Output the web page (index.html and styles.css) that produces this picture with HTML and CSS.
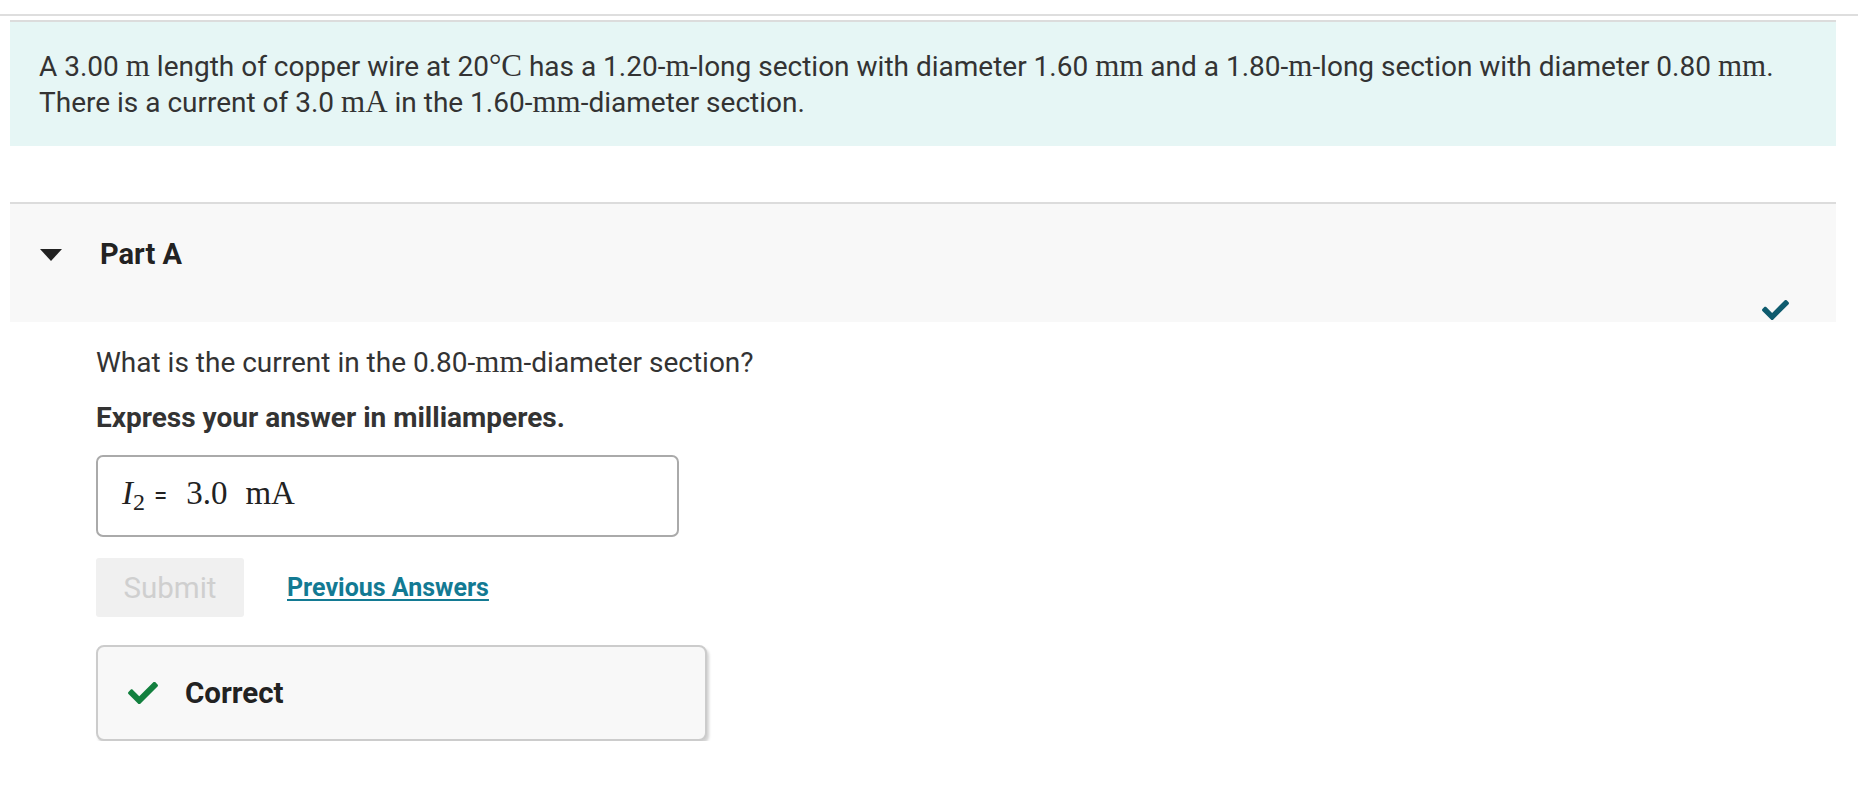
FILE: index.html
```html
<!DOCTYPE html>
<html>
<head>
<meta charset="utf-8">
<link rel="stylesheet" href="styles.css">
</head>
<body>
<div class="page">
  <div class="topline"></div>
  <div class="intro">
    <p>A 3.00 <span class="mj">m</span> length of copper wire at 20<span class="mj">°C</span> has a 1.20-<span class="mj">m</span>-long section with diameter 1.60 <span class="mj">mm</span> and a 1.80-<span class="mj">m</span>-long section with diameter 0.80 <span class="mj">mm</span>.<br>There is a current of 3.0 <span class="mj">mA</span> in the 1.60-<span class="mj">mm</span>-diameter section.</p>
  </div>

  <div class="part">
    <div class="part-head">
      <span class="tri"></span>
      <span class="part-title">Part A</span>
      <svg class="head-check" viewBox="0 68 512 376" width="27" height="20"><path fill="#0e5b6e" d="M173.898 439.404l-166.4-166.4c-9.997-9.997-9.997-26.206 0-36.204l36.203-36.204c9.997-9.998 26.207-9.998 36.204 0L192 312.69 432.095 72.596c9.997-9.997 26.207-9.997 36.204 0l36.203 36.204c9.997 9.997 9.997 26.206 0 36.204l-294.4 294.401c-9.998 9.997-26.207 9.997-36.204-.001z"/></svg>
    </div>
    <div class="part-body">
      <p class="question">What is the current in the 0.80-<span class="mj">mm</span>-diameter section?</p>
      <p class="instr">Express your answer in milliamperes.</p>
      <div class="answer">
        <span class="mj it">I</span><sub class="mj">2</sub><span class="eq">=</span><span class="mj">3.0</span><span class="mj unit">mA</span>
      </div>
      <div class="actions">
        <button class="submit">Submit</button>
        <a class="prev" href="#">Previous Answers</a>
      </div>
      <div class="feedback">
        <svg class="ok" viewBox="0 68 512 376" width="30" height="22"><path fill="#13803f" d="M173.898 439.404l-166.4-166.4c-9.997-9.997-9.997-26.206 0-36.204l36.203-36.204c9.997-9.998 26.207-9.998 36.204 0L192 312.69 432.095 72.596c9.997-9.997 26.207-9.997 36.204 0l36.203 36.204c9.997 9.997 9.997 26.206 0 36.204l-294.4 294.401c-9.998 9.997-26.207 9.997-36.204-.001z"/></svg>
        <span class="correct">Correct</span>
      </div>
    </div>
  </div>
</div>
</body>
</html>
```

FILE: styles.css
```css
html, body {
  margin: 0;
  padding: 0;
  background: #ffffff;
}
body {
  font-family: Roboto, "Liberation Sans", sans-serif;
  color: #333333;
  font-size: 28px;
}
p { margin: 0; }
.page {
  padding-top: 14px;
}
.topline {
  height: 2px;
  background: #dedede;
}
.intro {
  margin: 4px 22px 0 10px;
  border-top: 2px solid #dcdcdc;
  background: #e6f6f5;
  padding: 26px 29px 26px;
  line-height: 35px;
}
.mj {
  font-family: "Liberation Serif", "DejaVu Serif", serif;
  font-size: 31px;
}
.part {
  margin-top: 56px;
}
.part-head {
  position: relative;
  margin: 0 22px 0 10px;
  border-top: 2px solid #dcdcdc;
  background: #f8f8f8;
  height: 120px;
  display: flex;
  align-items: center;
  padding-left: 30px;
  box-sizing: border-box;
  padding-bottom: 18px;
}
.tri {
  width: 0;
  height: 0;
  border-left: 11px solid transparent;
  border-right: 11px solid transparent;
  border-top: 12px solid #222;
  margin-right: 38px;
  margin-top: 2px;
}
.part-title {
  font-weight: 700;
  font-size: 29px;
  color: #222;
}
.head-check {
  position: absolute;
  right: 47px;
  bottom: 2px;
}
.part-body {
  padding-left: 96px;
}
.question {
  margin-top: 20px;
  line-height: 40px;
}
.instr {
  margin-top: 15px;
  font-weight: 700;
  line-height: 40px;
}
.answer {
  margin-top: 17px;
  width: 583px;
  height: 82px;
  box-sizing: border-box;
  border: 2px solid #aaaaaa;
  border-radius: 7px;
  padding: 16px 24px 0;
  line-height: 40px;
  color: #222;
}
.answer .mj { font-size: 33px; }
.answer .it { font-style: italic; }
.answer sub.mj { font-size: 24px; vertical-align: -6px; line-height: 0; }
.eq {
  font-size: 24px;
  margin: 0 19px 0 9px;
}
.unit { margin-left: 18px; }
.actions {
  margin-top: 21px;
  display: flex;
  align-items: center;
}
.submit {
  width: 148px;
  height: 59px;
  border: none;
  border-radius: 3px;
  background: #f0f0f0;
  color: #cfcfcf;
  font-family: Roboto, "Liberation Sans", sans-serif;
  font-size: 29.5px;
  padding: 0;
}
.prev {
  margin-left: 43px;
  color: #137a93;
  font-weight: 700;
  font-size: 25px;
  text-decoration: underline;
  text-underline-offset: 3px;
  text-decoration-thickness: 2px;
}
.feedback {
  margin-top: 28px;
  width: 611px;
  height: 96px;
  box-sizing: border-box;
  border: 2px solid #cccccc;
  border-radius: 8px;
  background: #f8f8f8;
  box-shadow: 2px 3px 3px rgba(0,0,0,0.18);
  display: flex;
  align-items: center;
  padding-left: 30px;
}
.ok { margin-right: 27px; }
.correct {
  font-weight: 700;
  font-size: 29.5px;
  color: #222;
}
```
